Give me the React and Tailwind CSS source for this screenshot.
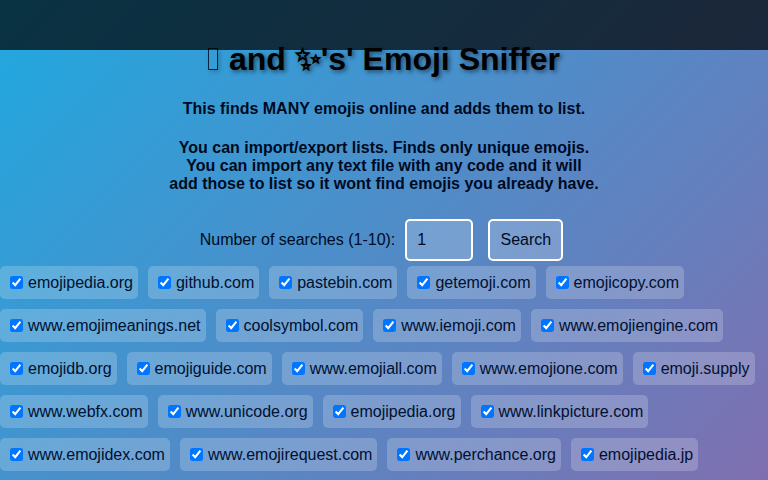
const sites = [
  "emojipedia.org", "github.com", "pastebin.com", "getemoji.com", "emojicopy.com",
  "www.emojimeanings.net", "coolsymbol.com", "www.iemoji.com", "www.emojiengine.com",
  "emojidb.org", "emojiguide.com", "www.emojiall.com", "www.emojione.com", "emoji.supply",
  "www.webfx.com", "www.unicode.org", "emojipedia.org", "www.linkpicture.com",
  "www.emojidex.com", "www.emojirequest.com", "www.perchance.org", "emojipedia.jp",
];

export default function App() {
  return (
    <div className="relative h-[480px] overflow-hidden bg-[linear-gradient(135deg,#1fa9e0,#806fb0)] font-['Liberation_Sans',sans-serif] text-[16px] text-[#000a22]">
      {/* top bar sits over the page */}
      <div className="absolute inset-x-0 top-0 z-10 h-[50px] bg-black/70" />

      <h1 className="pt-[41px] text-center text-[32px] leading-[37px] font-bold text-black [text-shadow:2px_2px_4px_rgba(0,0,0,0.5)]">
        {/* missing-glyph box from the original page */}
        <span className="mr-[2px] inline-block h-[22px] w-[10px] border-[1.5px] border-[#06243f] shadow-[2px_2px_4px_rgba(0,0,0,0.2)]" />{" "}
        and {"\u2728\uFE0E"}'s' Emoji Sniffer
      </h1>

      <div className="mt-[22px] text-center leading-[18px] font-bold">
        <p>This finds MANY emojis online and adds them to list.</p>
        <p className="mt-[21px]">
          You can import/export lists. Finds only unique emojis.
          <br />
          You can import any text file with any code and it will
          <br />
          add those to list so it wont find emojis you already have.
        </p>
      </div>

      <div className="mt-[26px] flex items-center justify-center pr-[5px]">
        <label>Number of searches (1-10):</label>
        <input
          type="number"
          defaultValue="1"
          className="ml-[10px] h-[42px] w-[68px] rounded-[5px] border-2 border-white bg-white/20 px-[10px] outline-none [appearance:textfield]"
        />
        <button className="ml-[15px] h-[42px] w-[75px] rounded-[5px] border-2 border-white bg-white/20">
          Search
        </button>
      </div>

      <div className="mt-[5px] flex flex-wrap gap-[10px]">
        {sites.map((site, i) => (
          <label key={i} className="flex h-[33px] items-center rounded-[5px] bg-white/20 pr-[5px] pl-[10px] text-[#001030]">
            <input type="checkbox" defaultChecked className="mr-[5px] h-[13px] w-[13px]" />
            {site}
          </label>
        ))}
      </div>
    </div>
  );
}
